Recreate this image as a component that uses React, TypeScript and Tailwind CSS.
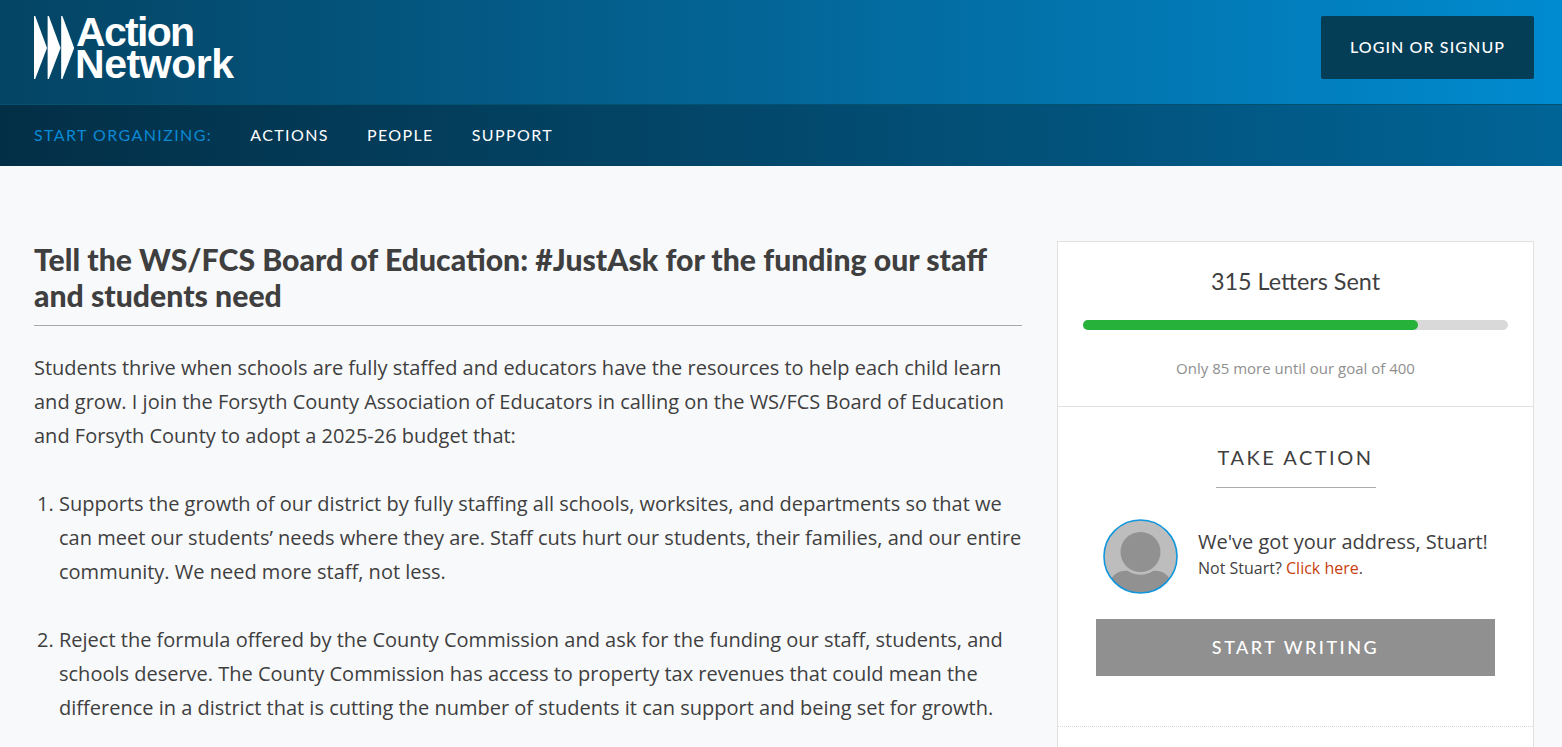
const LogoMark = () => (
  <svg width="41" height="64" viewBox="0 0 41 64" className="shrink-0 text-white" fill="currentColor">
    <path d="M0 0H1.2L13 32L1.2 63H0Z" />
    <path d="M13.6 0H14.8L26.6 32L14.8 63H13.6Z" />
    <path d="M27.2 0H28.4L40.2 32L28.4 63H27.2Z" />
  </svg>
)

const Avatar = () => (
  <svg width="75" height="75" viewBox="0 0 75 75" className="shrink-0">
    <defs>
      <clipPath id="avatar-clip">
        <circle cx="37.5" cy="37.5" r="36.5" />
      </clipPath>
    </defs>
    <circle cx="37.5" cy="37.5" r="36.5" fill="#bdbdbd" />
    <g clipPath="url(#avatar-clip)" fill="#919191">
      <circle cx="37.5" cy="33" r="20" />
      <path d="M7 75V64C9 55 17 51 25 52C33 57 42 57 50 52C58 51 66 55 68 64V75Z" />
    </g>
    <circle cx="37.5" cy="37.5" r="36.5" fill="none" stroke="#0f96dc" strokeWidth="1.6" />
  </svg>
)

export default function App() {
  return (
    <div className="h-[747px] overflow-hidden bg-[#f8f9fb] font-['Open_Sans',sans-serif] text-[#3f3f3f]">
      {/* Top bar */}
      <header className="flex h-[104px] items-start justify-between bg-gradient-to-r from-[#044464] to-[#008bd0] pl-[34px] pr-[28px]">
        <div className="flex items-start pt-[16px]">
          <LogoMark />
          <div className="ml-[1px] font-['Liberation_Sans',sans-serif] text-[41px] font-bold leading-[32px] text-white">
            <div className="h-[32px] tracking-[-1.7px]">Action</div>
            <div className="h-[32px] -ml-[1px] tracking-[-0.45px]">Network</div>
          </div>
        </div>
        <a className="mt-[16px] flex h-[63px] w-[213px] items-center justify-center rounded-[2px] bg-[#043d56] pb-[2px] font-['Lato',sans-serif] text-[16px] font-medium tracking-[1.1px] text-white">
          LOGIN OR SIGNUP
        </a>
      </header>

      <nav className="flex h-[62px] items-center border-t border-[#04506f] bg-gradient-to-r from-[#032f46] to-[#006496] pb-[2px] pl-[34px] font-['Lato',sans-serif] text-[16px] tracking-[1.4px] text-white">
        <span className="mr-[38px] text-[#0a8ad6]">START ORGANIZING:</span>
        <a className="mr-[38px]">ACTIONS</a>
        <a className="mr-[38px]">PEOPLE</a>
        <a>SUPPORT</a>
      </nav>

      <main className="flex items-start pl-[34px] pr-[28px] pt-[75px]">
        <article className="w-[988px] shrink-0">
          <h1 className="border-b border-[#a9a9a9] pb-[12px] font-['Lato',sans-serif] text-[30.2px] font-black leading-[36px] text-[#3f3f3f]">
            Tell the WS/FCS Board of Education: #JustAsk for the funding our staff and students need
          </h1>
          <div className="pt-[25px] text-[20px] leading-[34px]">
            <p>
              Students thrive when schools are fully staffed and educators have the resources to help each child learn and grow. I join the Forsyth County Association of Educators in calling on the WS/FCS Board of Education and Forsyth County to adopt a 2025-26 budget that:
            </p>
            <ol className="mt-[34px] list-decimal space-y-[34px] pl-[25px]">
              <li>
                Supports the growth of our district by fully staffing all schools, worksites, and departments so that we can meet our students’ needs where they are. Staff cuts hurt our students, their families, and our entire community. We need more staff, not less.
              </li>
              <li>
                Reject the formula offered by the County Commission and ask for the funding our staff, students, and schools deserve. The County Commission has access to property tax revenues that could mean the difference in a district that is cutting the number of students it can support and being set for growth.
              </li>
            </ol>
          </div>
        </article>

        <aside className="ml-[35px] w-[477px] shrink-0 border border-[#e1e1e1] bg-white">
          <section className="border-b border-[#e1e1e1] px-[25px] pb-[27px] pt-[23px] text-center">
            <h3 className="font-['Lato',sans-serif] text-[23.4px] leading-[32px]">315 Letters Sent</h3>
            <div className="mt-[23px] h-[10px] rounded-full bg-[#d9d9d9]">
              <div className="h-full w-[335px] rounded-full bg-[#25b13a]" />
            </div>
            <p className="mt-[27px] text-[15px] leading-[22px] text-[#8f8f8f]">Only 85 more until our goal of 400</p>
          </section>

          <section className="border-b border-dotted border-[#d8d8d8] px-[38px] pb-[50px] pt-[35px]">
            <h4 className="mx-auto w-[160px] whitespace-nowrap border-b border-[#ababab] pb-[15px] text-center font-['Lato',sans-serif] text-[20px] leading-[30px] tracking-[2.5px]">
              TAKE ACTION
            </h4>
            <div className="ml-[7px] mt-[31px] flex items-center">
              <Avatar />
              <div className="ml-[20px] -mt-[2px]">
                <div className="text-[20px] leading-[25px]">We've got your address, Stuart!</div>
                <div className="text-[16px] leading-[28px]">
                  Not Stuart? <a className="text-[#c8400f]">Click here</a>.
                </div>
              </div>
            </div>
            <button className="mt-[25px] flex h-[57px] w-[399px] items-center justify-center bg-[#909090] font-['Lato',sans-serif] text-[18px] font-medium tracking-[2.5px] text-white">
              START WRITING
            </button>
          </section>
          <div className="h-[40px]" />
        </aside>
      </main>
    </div>
  )
}
